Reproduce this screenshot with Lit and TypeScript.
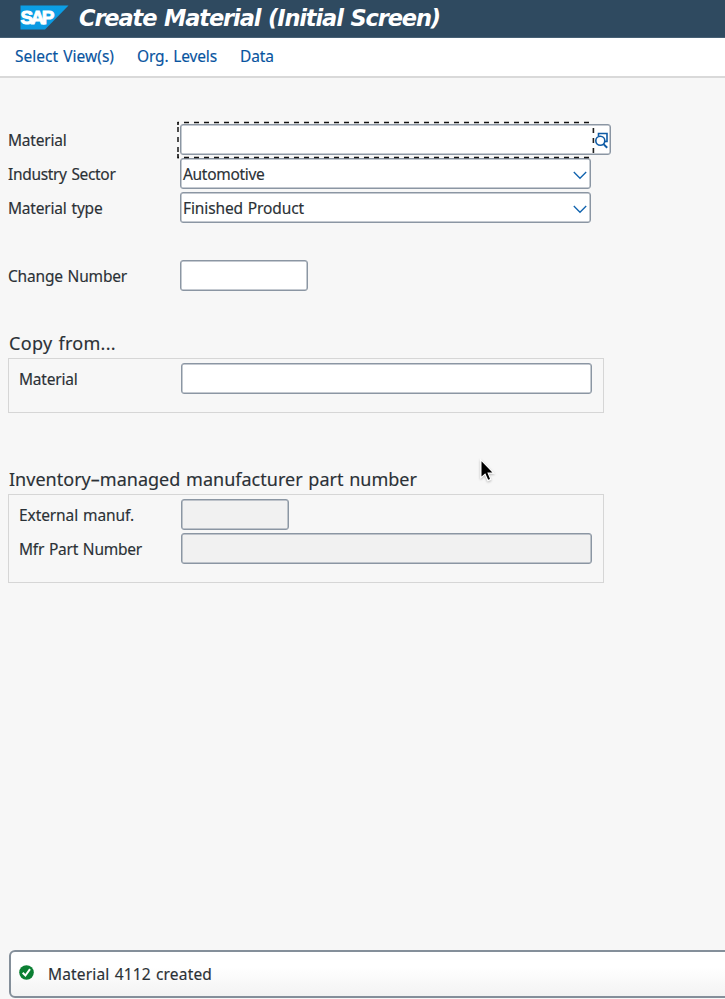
import { LitElement, html, css, svg } from "lit";
import { customElement, property } from "lit/decorators.js";

/** Text whose tracking is adjusted so that it spans a given width. */
@customElement("fit-text")
class FitText extends LitElement {
  @property({ type: Number }) width = 0;
  @property() text = "";

  static styles = css`
    :host { display: inline-block; white-space: pre; }
    .run { display: inline-block; white-space: pre; }
  `;

  firstUpdated() {
    const run = this.renderRoot.querySelector<HTMLElement>(".run")!;
    const natural = run.getBoundingClientRect().width;
    run.style.letterSpacing = `${(this.width - natural) / this.text.length}px`;
  }

  render() {
    return html`<span class="run">${this.text}</span>`;
  }
}

const fit = (text: string, width: number) =>
  html`<fit-text .text=${text} .width=${width}></fit-text>`;

const chevron = html`<svg class="chevron" width="14" height="9" viewBox="0 0 14 9">
  ${svg`<path d="M.8 1 7 7.3 13.2 1" fill="none" stroke="#0f62ae" stroke-width="1.3"/>`}
</svg>`;

@customElement("app-root")
class AppRoot extends LitElement {
  static styles = css`
    * { box-sizing: border-box; }
    :host {
      display: flex; flex-direction: column; position: relative;
      height: 999px; overflow: hidden; background: #f7f7f7; color: #2b3136;
      font: 15.5px/22px "Noto Sans", "Open Sans", sans-serif;
      word-spacing: 1px; -webkit-text-stroke: .15px currentColor;
    }
    .title {
      display: flex; align-items: center; flex: none; height: 38px;
      padding: 0 0 2px 20px; background: #2f4a60; border-bottom: 1px solid #466075; color: #fff;
      font-family: "DejaVu Sans", sans-serif; -webkit-text-stroke: 0;
      font-size: 22.5px; font-style: italic; font-weight: 700; line-height: 34px; word-spacing: 1px;
    }
    .logo { margin-right: 10px; margin-top: -1px; flex: none; }
    .menu {
      display: flex; align-items: center; flex: none; height: 40px; gap: 23px;
      padding: 0 0 2px 15px; background: #fff; border-bottom: 2px solid #d9d9d9; color: #0854a0;
    }
    .form { flex: 1; padding: 46px 0 0 8px; }
    .row { display: flex; height: 31px; margin-bottom: 3px; align-items: center; }
    .label { width: 172px; flex: none; }
    .box {
      position: relative; display: flex; align-items: center; justify-content: space-between;
      height: 31px; padding: 0 3px 0 2px; background: #fff;
      border: 1px solid #8b96a3; border-radius: 3px; box-shadow: inset 0 0 0 .5px #8b96a3;
    }
    .wide { width: 411px; }
    .change { width: 128px; }
    .short { width: 108px; }
    .off { background: #f1f1f1; }
    .search { width: 431px; justify-content: flex-end; z-index: 1; }
    .focus { position: absolute; left: -4px; top: -4px; }
    .lens { margin-right: -3px; margin-top: 2px; }
    .chevron { margin-top: 3px; }
    .gap { margin-top: 37px; }
    .heading { height: 28px; font-size: 18px; line-height: 27px; padding-left: 1px; }
    .heading.first { margin-top: 39px; }
    .heading.second { margin-top: 53px; }
    .group { width: 596px; border: 1px solid #d6d6d6; padding: 4px 0 0 10px; }
    .group.one { height: 55px; }
    .group.two { height: 89px; }
    .group .label { width: 162px; }
    .status {
      display: flex; align-items: center; flex: none; height: 48px;
      margin: 0 -8px 1px 9px; padding-left: 8px; gap: 14px;
      border: 2px solid #848f9a; border-radius: 6px;
      background: linear-gradient(#fff 35%, #f3f3f3);
    }
    .ok { margin-top: -3px; }
    .pointer { position: absolute; left: 478px; top: 456px; filter: drop-shadow(0 1px 1px #0004); }
  `;

  render() {
    return html`
      <div class="title">
        <svg class="logo" width="49" height="25" viewBox="0 0 49 25">
          <defs><linearGradient id="g" x1="0" y1="0" x2="0" y2="1">
            <stop offset="0" stop-color="#0b9fe6"/><stop offset="1" stop-color="#0a99e2"/>
          </linearGradient></defs>
          <path d="M.5.5H48.5L25 24.5H.5Z" fill="url(#g)"/>
          <text x=".5" y="19" textLength="34" lengthAdjust="spacing"
            font-family="Liberation Sans, sans-serif" font-weight="700" font-style="normal"
            font-size="19" fill="#fff" stroke="#fff" stroke-width=".9" style="word-spacing:0">SAP</text>
        </svg>
        ${fit("Create Material (Initial Screen)", 361)}
      </div>
      <div class="menu">
        ${fit("Select View(s)", 99)}${fit("Org. Levels", 80)}${fit("Data", 34)}
      </div>
      <div class="form">
        <div class="row">
          <div class="label">${fit("Material", 58.5)}</div>
          <div class="box search">
            <svg class="focus" width="420" height="39" viewBox="0 0 420 39">
              <path d="M.5 1.5H417M.5 36.5H417" stroke="#111" stroke-width="1.6" stroke-dasharray="5 5" stroke-dashoffset="3.5" fill="none"/>
              <path d="M1 5V36M416.4 6V36" stroke="#222" stroke-width="1.6" stroke-dasharray="5 5" stroke-dashoffset="-1" fill="none"/>
              <path d="M1 1V4M1 33V37.3" stroke="#111" stroke-width="1.6"/>
            </svg>
            <svg class="lens" width="16" height="18" viewBox="0 0 16 18">
              <g fill="none" stroke="#0f5ba5">
                <path d="M4.5 4V1.5H13V9.5H11" stroke-width="1.6"/>
                <circle cx="6.3" cy="8.8" r="4.5" stroke-width="1.6"/>
                <path d="M9.5 12.1 13.2 15.8" stroke-width="2"/>
              </g>
            </svg>
          </div>
        </div>
        <div class="row">
          <div class="label">${fit("Industry Sector", 107.5)}</div>
          <div class="box wide">${fit("Automotive", 81.5)}${chevron}</div>
        </div>
        <div class="row">
          <div class="label">${fit("Material type", 94.5)}</div>
          <div class="box wide">${fit("Finished Product", 121)}${chevron}</div>
        </div>
        <div class="row gap">
          <div class="label">${fit("Change Number", 119)}</div>
          <div class="box change"></div>
        </div>
        <div class="heading first">${fit("Copy from...", 107)}</div>
        <div class="group one">
          <div class="row">
            <div class="label">${fit("Material", 58.5)}</div>
            <div class="box wide"></div>
          </div>
        </div>
        <div class="heading second">${fit("Inventory–managed manufacturer part number", 408)}</div>
        <div class="group two">
          <div class="row">
            <div class="label">${fit("External manuf.", 115)}</div>
            <div class="box short off"></div>
          </div>
          <div class="row">
            <div class="label">${fit("Mfr Part Number", 123)}</div>
            <div class="box wide off"></div>
          </div>
        </div>
      </div>
      <div class="status">
        <svg class="ok" width="15" height="15" viewBox="0 0 15 15">
          <circle cx="7.5" cy="7.5" r="7.3" fill="#0b7f33"/>
          <path d="M3.7 7.8 6.4 10.5 11 4.2" fill="none" stroke="#fff" stroke-width="2"/>
        </svg>
        ${fit("Material 4112 created", 164)}
      </div>
      <svg class="pointer" width="20" height="30" viewBox="0 0 20 30">
        <path d="M2.2 2.5V23L6.8 19 9.6 25.5 13.5 23.8 10.8 17.8H17Z" fill="#fff"/>
        <path d="M3.5 5.3V20.6L7.3 17.2 10.2 23.7 12 22.9 9.3 16.5H14.4Z" fill="#000"/>
      </svg>
    `;
  }
}
